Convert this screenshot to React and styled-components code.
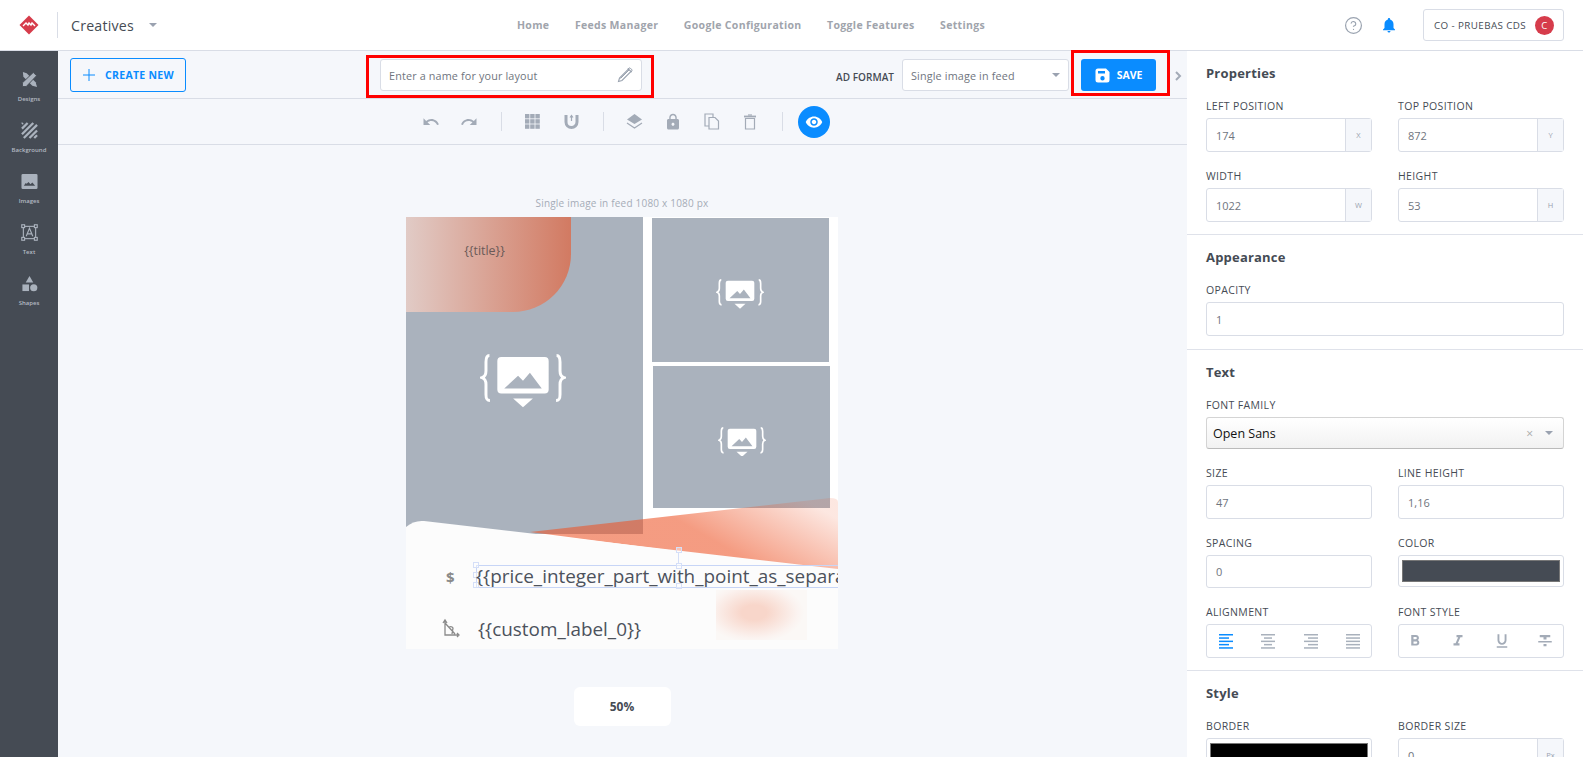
import React from "react";
import styled, { createGlobalStyle } from "styled-components";
import { MdUndo, MdRedo, MdVisibility, MdLock, MdNotifications, MdFormatBold, MdFormatItalic, MdFormatUnderlined, MdFormatStrikethrough } from "react-icons/md";
import { CircleHelp } from "lucide-react";

const GlobalStyle = createGlobalStyle`
  html, body { margin: 0; padding: 0; height: 100%; overflow: hidden; }
  body { font-family: "Open Sans", sans-serif; color: #454b54; background: #f5f7fb; }
  * { box-sizing: border-box; }
`;

const Page = styled.div`
  width: 1583px;
  height: 757px;
  display: flex;
  flex-direction: column;
  overflow: hidden;
`;

const TopBar = styled.header`
  height: 51px;
  flex: none;
  display: flex;
  align-items: center;
  background: #fff;
  border-bottom: 1px solid #d9dde6;
  position: relative;
`;

const LogoBox = styled.div`
  width: 58px;
  height: 26px;
  display: flex;
  align-items: center;
  justify-content: center;
  border-right: 1px solid #d9dde6;
`;

const AppName = styled.div`
  margin-left: 13px;
  font-size: 14.2px;
  color: #454b54;
  letter-spacing: 0.2px;
`;

const Caret = styled.span`
  width: 0;
  height: 0;
  margin-left: ${p => p.$gap || 0}px;
  border-left: 4px solid transparent;
  border-right: 4px solid transparent;
  border-top: 4px solid #9aa2b0;
`;

const Nav = styled.nav`
  position: absolute;
  left: 517px;
  top: 0;
  height: 50px;
  display: flex;
  align-items: center;
  gap: 25.5px;
`;

const NavLink = styled.a`
  font-size: 10.5px;
  font-weight: 700;
  color: #a0a4ac;
  letter-spacing: 0.33px;
`;

const TopRight = styled.div`
  margin-left: auto;
  margin-right: 19px;
  display: flex;
  align-items: center;
  color: #9aa3b0;
`;

const Account = styled.div`
  width: 141px;
  height: 32px;
  margin-left: 25px;
  padding: 0 9px 0 10px;
  display: flex;
  align-items: center;
  justify-content: space-between;
  border: 1px solid #d9dde6;
  border-radius: 3px;
  font-size: 9.8px;
  font-weight: 500;
  color: #454b54;
  letter-spacing: 0.4px;
  white-space: nowrap;
`;

const Avatar = styled.span`
  width: 19px;
  height: 19px;
  border-radius: 50%;
  background: #d63c4b;
  color: #fff;
  display: flex;
  align-items: center;
  justify-content: center;
  font-size: 9.5px;
`;

const Body = styled.div`
  flex: 1;
  display: flex;
  min-height: 0;
`;

const SideBar = styled.aside`
  width: 58px;
  flex: none;
  background: #454b54;
  padding-top: 20px;
  display: flex;
  flex-direction: column;
  align-items: center;
`;

const SideItem = styled.div`
  height: 51px;
  width: 100%;
  display: flex;
  flex-direction: column;
  align-items: center;
  color: #b4bac3;
  font-size: 6px;
  line-height: 8px;
  font-weight: 600;
  gap: 7px;

  svg {
    width: 17px;
    height: 17px;
    flex: none;
  }
`;

const Main = styled.main`
  flex: 1;
  display: flex;
  flex-direction: column;
  min-width: 0;
  background: #f5f7fb;
`;

const ActionBar = styled.div`
  height: 48px;
  flex: none;
  display: flex;
  align-items: flex-start;
  padding-left: 12px;
  border-bottom: 1px solid #d9dde6;
  position: relative;
`;

const CreateButton = styled.button`
  width: 116px;
  height: 34px;
  margin-top: 7px;
  display: flex;
  align-items: center;
  gap: 10px;
  padding: 0 0 0 12px;
  background: transparent;
  border: 1px solid #0a8cff;
  border-radius: 3px;
  color: #0a8cff;
  font-family: "Open Sans", sans-serif;
  font-size: 10.5px;
  font-weight: 700;
  letter-spacing: 0.3px;
`;

const Highlight = styled.div`
  border: 3px solid #f00;
  display: flex;
  align-items: flex-start;
`;

const NameBox = styled(Highlight)`
  width: 288px;
  height: 43px;
  margin: 4px 0 0 180px;
  padding: 1px 0 0 11px;
`;

const SaveBox = styled(Highlight)`
  width: 99px;
  height: 46px;
  margin: -1px 0 0 2px;
  padding: 6px 0 0 7px;
`;

const Field = styled.div`
  height: 32px;
  background: #fff;
  border: 1px solid #d9dde6;
  border-radius: 3px;
  display: flex;
  align-items: center;
  justify-content: space-between;
  padding: 0 8px;
  font-size: 10.8px;
  color: #6f757e;
  letter-spacing: 0.15px;
`;

const NameField = styled(Field)`
  width: 262px;
`;

const FormatLabel = styled.span`
  margin: 19px 6px 0 182px;
  width: 60px;
  font-size: 10px;
  font-weight: 600;
  line-height: 14px;
  color: #454b54;
  letter-spacing: 0.05px;
  white-space: nowrap;
`;

const FormatField = styled(Field)`
  width: 167px;
  margin-top: 8px;
`;

const SaveButton = styled.button`
  width: 75px;
  height: 32px;
  display: flex;
  align-items: center;
  justify-content: center;
  gap: 7px;
  background: #0a8cff;
  border: 0;
  border-radius: 3px;
  color: #fff;
  font-family: "Open Sans", sans-serif;
  font-size: 10.5px;
  font-weight: 700;
`;

const Chevron = styled.svg`
  margin: 20px 0 0 5px;
`;

const ToolBar = styled.div`
  height: 46px;
  flex: none;
  display: flex;
  align-items: center;
  justify-content: center;
  border-bottom: 1px solid #d9dde6;
  color: #a3abb7;
  padding-right: 4px;
`;

const Tool = styled.span`
  width: 38.5px;
  display: flex;
  justify-content: center;
`;

const Separator = styled.span`
  width: 1px;
  height: 19px;
  margin: 0 12px;
  background: #d9dde6;
`;

const EyeButton = styled.span`
  width: 32px;
  height: 32px;
  border-radius: 50%;
  background: #0a8cff;
  color: #fff;
  display: flex;
  align-items: center;
  justify-content: center;
  margin-left: 3px;
`;

const Stage = styled.div`
  flex: 1;
  display: flex;
  flex-direction: column;
  align-items: center;
  padding: 51px 1px 0 0;
  min-height: 0;
`;

const Caption = styled.div`
  font-size: 10px;
  color: #a5acb7;
  line-height: 14px;
  letter-spacing: 0.2px;
  margin-bottom: 7px;
`;

const Canvas = styled.div`
  position: relative;
  width: 432px;
  height: 432px;
  flex: none;
  background: #fff;
  overflow: hidden;
`;

const ImageSlot = styled.div`
  position: absolute;
  left: ${p => p.$x}px;
  top: ${p => p.$y}px;
  width: ${p => p.$w}px;
  height: ${p => p.$h}px;
  padding: ${p => p.$shift}px ${p => p.$right || 0}px 0 0;
  background: #aab2bd;
  display: flex;
  align-items: center;
  justify-content: center;
`;

const TitleShape = styled.div`
  position: absolute;
  left: 0;
  top: 0;
  width: 165px;
  height: 95px;
  border-bottom-right-radius: 58px;
  background: linear-gradient(90deg, #e1cbc6, #d27a62);
  display: flex;
  justify-content: center;
  padding: 25px 8px 0 0;
  font-size: 12.4px;
  line-height: 17px;
  color: #6a5a58;
`;

const CanvasArt = styled.svg`
  position: absolute;
  left: 0;
  top: 0;
`;

const CanvasText = styled.div`
  position: absolute;
  left: ${p => p.$x}px;
  top: ${p => p.$y}px;
  font-size: 18.9px;
  line-height: 24px;
  color: #4c525c;
  white-space: nowrap;
`;

const Dollar = styled.div`
  position: absolute;
  left: 40px;
  top: 350px;
  font-size: 15px;
  line-height: 20px;
  font-weight: 700;
  color: #8a8a8a;
`;

const Selection = styled.div`
  position: absolute;
  left: 70px;
  top: 348px;
  width: 370px;
  height: 23px;
  border: 1px solid #c7d5f6;
`;

const Handle = styled.span`
  position: absolute;
  left: ${p => p.$x}px;
  top: ${p => p.$y}px;
  width: 6px;
  height: 6px;
  border: 1px solid #d5dff8;
  background: rgba(255, 255, 255, 0.4);
`;

const HandleStalk = styled.span`
  position: absolute;
  left: 272px;
  top: 336px;
  width: 1px;
  height: 10px;
  background: #d5dff8;
`;

const Blob = styled.div`
  position: absolute;
  left: 310px;
  top: 373px;
  width: 91px;
  height: 50px;
  background: radial-gradient(ellipse 50px 30px at 42% 45%, #f8d6ca 25%, #fbf3f0 85%, #fbf8f6 100%);
`;

const ZoomPill = styled.div`
  width: 97px;
  height: 39px;
  margin-top: 38px;
  flex: none;
  background: #fff;
  border-radius: 6px;
  display: flex;
  align-items: center;
  justify-content: center;
  font-size: 12px;
  font-weight: 700;
  color: #454b54;
`;

const Panel = styled.aside`
  width: 396px;
  flex: none;
  background: #fff;
  overflow: hidden;
`;

const Section = styled.section`
  padding: 13px 19px ${p => p.$bottom || 12}px 19px;
  border-bottom: 1px solid #dfe2ea;

  &:last-child { border-bottom: 0; }
`;

const SectionTitle = styled.h2`
  margin: 0 0 18px;
  font-size: 13px;
  line-height: 18px;
  font-weight: 700;
  color: #454b54;
  letter-spacing: 0.2px;
`;

const Grid = styled.div`
  display: grid;
  grid-template-columns: 166px 166px;
  column-gap: 26px;
  row-gap: 18px;
`;

const Wide = styled.div`
  grid-column: 1 / -1;
`;

const Label = styled.label`
  display: block;
  margin-bottom: 5px;
  font-size: 10.5px;
  line-height: 13px;
  font-weight: 500;
  color: #454b54;
  letter-spacing: 0.35px;
  white-space: nowrap;
`;

const InputBox = styled.div`
  height: ${p => p.$h || 34}px;
  display: flex;
  align-items: stretch;
  background: #fff;
  border: 1px solid #d9dde6;
  border-radius: 3px;
  font-size: 11px;
  color: #6f757e;
`;

const InputValue = styled.span`
  flex: 1;
  padding-left: 9px;
  display: flex;
  align-items: center;
`;

const Unit = styled.span`
  width: 26px;
  flex: none;
  display: flex;
  align-items: center;
  justify-content: center;
  background: #f5f7fb;
  border-left: 1px solid #d9dde6;
  font-size: 7.5px;
  color: #9aa3b0;
`;

const Swatch = styled.div`
  height: 32px;
  padding: 4px 3px;
  background: #fff;
  border: 1px solid #d9dde6;
  border-radius: 3px;

  div {
    height: 22px;
    background: ${p => p.$color};
    border: 1px solid #777;
  }
`;

const FontSelect = styled.div`
  height: 32px;
  display: flex;
  align-items: center;
  justify-content: space-between;
  padding: 0 10px 0 6px;
  background: linear-gradient(#fff, #f2f2f2);
  border: 1px solid #d4d4d4;
  border-bottom-color: #bbb;
  border-radius: 3px;
  font-size: 12.5px;
  color: #111;
`;

const SelectEnd = styled.span`
  display: flex;
  align-items: center;
  gap: 9px;
  color: #aaa;
  font-size: 12px;
`;

const IconGroup = styled(InputBox)`
  align-items: center;
  justify-content: space-between;
  padding: ${p => p.$pad};
  color: #a3abb7;
`;

const alignments = {
  left: [[0, 14], [0, 10], [0, 14], [0, 10], [0, 14]],
  center: [[0, 14], [3, 8], [0, 14], [3, 8], [0, 14]],
  right: [[0, 14], [4, 10], [0, 14], [4, 10], [0, 14]],
  justify: [[0, 14], [0, 14], [0, 14], [0, 14], [0, 14]],
};

const AlignIcon = ({ kind, active }) => (
  <svg width="14" height="15" viewBox="0 0 14 15" fill={active ? "#0a8cff" : "#a9b1bc"}>
    {alignments[kind].map(([x, w], i) => <rect key={i} x={x} y={i * 3.3} width={w} height="1.5" />)}
  </svg>
);

const ImagePlaceholder = ({ size }) => (
  <svg width={size} height={size * 0.62} viewBox="0 0 86 54" fill="#fff">
    <path d="M9 1.500C6 1.500 5.500 4 5.500 8v9c0 4-1 6-4 7 3 1 4 3 4 7v10c0 4 .5 6 4 6" fill="none" stroke="#fff" strokeWidth="3" />
    <path d="M77 1.500c3 0 3.500 2.500 3.500 6.500v9c0 4 1 6 4 7-3 1-4 3-4 7v10c0 4-.5 6-4 6" fill="none" stroke="#fff" strokeWidth="3" />
    <path fillRule="evenodd" d="M21 3h44a4 4 0 0 1 4 4v29a4 4 0 0 1-4 4H21a4 4 0 0 1-4-4V7a4 4 0 0 1 4-4Zm3 32h38l-12-16-7 8-5-5Z" />
    <path d="M33 45h20L43 54Z" />
  </svg>
);

function App() {
  return (
    <Page>
      <GlobalStyle />
      <TopBar>
        <LogoBox>
          <svg width="20" height="20" viewBox="0 0 20 20">
            <path d="M10 0.500 19.500 10 10 19.500 0.500 10Z" fill="#d63c4b" />
            <path d="M4 11 7 8l2 2 1-2 2 2 1-2 3 3" fill="none" stroke="#fff" strokeWidth="1.400" />
          </svg>
        </LogoBox>
        <AppName>Creatives</AppName>
        <Caret $gap={15} />
        <Nav>
          <NavLink>Home</NavLink>
          <NavLink>Feeds Manager</NavLink>
          <NavLink>Google Configuration</NavLink>
          <NavLink>Toggle Features</NavLink>
          <NavLink>Settings</NavLink>
        </Nav>
        <TopRight>
          <CircleHelp size={19} strokeWidth={1.5} />
          <MdNotifications size={18} color="#0a8cff" style={{ marginLeft: 17 }} />
          <Account>CO - PRUEBAS CDS <Avatar>C</Avatar></Account>
        </TopRight>
      </TopBar>
      <Body>
        <SideBar>
          <SideItem>
            <svg viewBox="0 0 18 18" fill="#aab2bd">
              <path d="M2 1 6 2.500 15.500 12l1.500 5-5-1.500L2.500 6Z" />
              <path d="M13 1.500 16.500 5 5.500 16.500H1.500V12.500Z" stroke="#454b54" strokeWidth="1" />
            </svg>
            Designs
          </SideItem>
          <SideItem>
            <svg viewBox="0 0 18 18" fill="none" stroke="#aab2bd" strokeWidth="2.400">
              <path d="M1 7 7 1M1 13 13 1M3 17 17 3M9 17 17 9M14 17 17 14M1 2 2 1" />
            </svg>
            Background
          </SideItem>
          <SideItem>
            <svg viewBox="0 0 18 18" fill="#aab2bd">
              <path fillRule="evenodd" d="M2 1h14a1.500 1.500 0 0 1 1.500 1.500v13A1.500 1.500 0 0 1 16 17H2a1.500 1.500 0 0 1-1.500-1.500v-13A1.500 1.500 0 0 1 2 1Zm1 12.500h12L12 10l-2 2-2-2.500-2 2-1-1Z" />
            </svg>
            Images
          </SideItem>
          <SideItem>
            <svg viewBox="0 0 18 18" fill="none" stroke="#aab2bd" strokeWidth="1.200">
              <rect x="2.500" y="2.500" width="13" height="13" />
              <rect x="0.800" y="0.800" width="3" height="3" fill="#454b54" />
              <rect x="14.200" y="0.800" width="3" height="3" fill="#454b54" />
              <rect x="0.800" y="14.200" width="3" height="3" fill="#454b54" />
              <rect x="14.200" y="14.200" width="3" height="3" fill="#454b54" />
              <path d="M5.500 13 9 4.500 12.500 13M6.500 10.500h5" />
            </svg>
            Text
          </SideItem>
          <SideItem>
            <svg viewBox="0 0 18 18" fill="#aab2bd">
              <path d="M9 1 13 8H5Z" />
              <rect x="1.500" y="10" width="7" height="7" />
              <circle cx="13.500" cy="13.500" r="3.800" />
            </svg>
            Shapes
          </SideItem>
        </SideBar>
        <Main>
          <ActionBar>
            <CreateButton>
              <svg width="12" height="12" viewBox="0 0 12 12" stroke="#0a8cff" strokeWidth="1"><path d="M6 0v12M0 6h12" /></svg>
              CREATE NEW
            </CreateButton>
            <NameBox>
              <NameField>
                Enter a name for your layout
                <svg width="16" height="16" viewBox="0 0 16 16" fill="none" stroke="#9aa3b0">
                  <path d="M1.500 14.500 2.500 11 11.500 2l2.500 2.500-9 9Z" strokeWidth="1.100" />
                  <path d="M3.500 11.500 12 3M10.500 2 13 .8 15.200 3 14 5.500" strokeWidth="1" />
                </svg>
              </NameField>
            </NameBox>
            <FormatLabel>AD FORMAT</FormatLabel>
            <FormatField>
              Single image in feed
              <Caret />
            </FormatField>
            <SaveBox>
              <SaveButton>
                <svg width="15" height="15" viewBox="0 0 15 15" fill="#fff">
                  <path fillRule="evenodd" d="M3 .5h8l3.500 3.500v8a2.500 2.500 0 0 1-2.500 2.500H3A2.500 2.500 0 0 1 .5 12V3A2.500 2.500 0 0 1 3 .5ZM3 3v2.500h7V3Zm4.500 5a2.200 2.200 0 1 0 0 4.400 2.200 2.200 0 0 0 0-4.400Z" />
                </svg>
                SAVE
              </SaveButton>
            </SaveBox>
            <Chevron width="7" height="10" viewBox="0 0 7 10" fill="none" stroke="#a3abb7" strokeWidth="2"><path d="M1 1l4 4-4 4" /></Chevron>
          </ActionBar>
          <ToolBar>
            <Tool><MdUndo size={18} /></Tool>
            <Tool><MdRedo size={18} /></Tool>
            <Separator />
            <Tool>
              <svg width="15" height="15" viewBox="0 0 15 15" fill="#a3abb7">
                {[0, 5.2, 10.4].flatMap(y => [0, 5.2, 10.4].map(x => <rect key={x + "-" + y} x={x} y={y} width="4.400" height="4.400" />))}
              </svg>
            </Tool>
            <Tool>
              <svg width="15" height="15" viewBox="0 0 15 15" fill="none" stroke="#a3abb7">
                <path d="M2 1v7a5.500 5.500 0 0 0 11 0V1" strokeWidth="3" />
                <path d="M7.500 7V1.500M6 3.500 7.500 1.500 9 3.500" strokeWidth="1.200" />
              </svg>
            </Tool>
            <Separator />
            <Tool>
              <svg width="17" height="17" viewBox="0 0 17 17" fill="#a3abb7">
                <path d="M8.500 1 16 6.500 8.500 11 1 6.500Z" />
                <path d="M1 10 8.500 15 16 10" fill="none" stroke="#a3abb7" strokeWidth="1.300" />
              </svg>
            </Tool>
            <Tool><MdLock size={18} /></Tool>
            <Tool>
              <svg width="16" height="17" viewBox="0 0 16 17" fill="#f5f7fb" stroke="#a3abb7" strokeWidth="1.200">
                <path d="M1 1h8v12H1Z" />
                <path d="M5 4.500h6l3.500 3.500v8H5Z" />
              </svg>
            </Tool>
            <Tool>
              <svg width="14" height="16" viewBox="0 0 14 16" fill="none" stroke="#a3abb7" strokeWidth="1.200">
                <path d="M2.500 4.500h9V15h-9Z" />
                <path d="M1 2.500h12" strokeWidth="1.800" />
                <path d="M5 1h4" />
              </svg>
            </Tool>
            <Separator />
            <EyeButton><MdVisibility size={18} /></EyeButton>
          </ToolBar>
          <Stage>
            <Caption>Single image in feed 1080 x 1080 px</Caption>
            <Canvas>
              <ImageSlot $x={0} $y={0} $w={237} $h={317} $shift={11} $right={4}><ImagePlaceholder size={86} /></ImageSlot>
              <ImageSlot $x={246} $y={1} $w={177} $h={144} $shift={8} $right={2}><ImagePlaceholder size={48} /></ImageSlot>
              <ImageSlot $x={247} $y={149} $w={177} $h={142} $shift={9}><ImagePlaceholder size={48} /></ImageSlot>
              <TitleShape>{"{{title}}"}</TitleShape>
              <CanvasArt width="432" height="432" viewBox="0 0 432 432">
                <defs>
                  <linearGradient id="peach" gradientUnits="userSpaceOnUse" x1="345" y1="345" x2="385" y2="275">
                    <stop offset="0" stopColor="#ed5427" stopOpacity="0.58" />
                    <stop offset="1" stopColor="#ed5427" stopOpacity="0.14" />
                  </linearGradient>
                </defs>
                <path d="M124 315 424 281q8 0 8 4v70Z" fill="url(#peach)" />
                <path d="M0 310q8-7 18-6L432 352v80H0Z" fill="#fcfcfc" />
              </CanvasArt>
              <Blob />
              <Dollar>$</Dollar>
              <Selection />
              <HandleStalk />
              <Handle $x={67} $y={345} />
              <Handle $x={67} $y={355} />
              <Handle $x={67} $y={365} />
              <Handle $x={270} $y={346} />
              <Handle $x={270} $y={366} />
              <Handle $x={270} $y={330} />
              <CanvasText $x={70} $y={347}>{"{{price_integer_part_with_point_as_separator}}"}</CanvasText>
              <CanvasArt width="432" height="432" viewBox="0 0 432 432" fill="none" stroke="#8a8a8a" strokeWidth="1.300">
                <path d="M39 404v14h13M39 406 49 417M43 410q3-1 4 1l-1 6M37 406l2-3 2 3M51 416l2 2-2 2" />
              </CanvasArt>
              <CanvasText $x={72} $y={400}>{"{{custom_label_0}}"}</CanvasText>
            </Canvas>
            <ZoomPill>50%</ZoomPill>
          </Stage>
        </Main>
        <Panel>
          <Section>
            <SectionTitle>Properties</SectionTitle>
            <Grid>
              <div><Label>LEFT POSITION</Label><InputBox><InputValue>174</InputValue><Unit>X</Unit></InputBox></div>
              <div><Label>TOP POSITION</Label><InputBox><InputValue>872</InputValue><Unit>Y</Unit></InputBox></div>
              <div><Label>WIDTH</Label><InputBox><InputValue>1022</InputValue><Unit>W</Unit></InputBox></div>
              <div><Label>HEIGHT</Label><InputBox><InputValue>53</InputValue><Unit>H</Unit></InputBox></div>
            </Grid>
          </Section>
          <Section $bottom={13}>
            <SectionTitle>Appearance</SectionTitle>
            <Label>OPACITY</Label>
            <InputBox><InputValue>1</InputValue></InputBox>
          </Section>
          <Section>
            <SectionTitle>Text</SectionTitle>
            <Grid>
              <Wide>
                <Label>FONT FAMILY</Label>
                <FontSelect>Open Sans <SelectEnd>× <Caret $gap={3} /></SelectEnd></FontSelect>
              </Wide>
              <div><Label>SIZE</Label><InputBox><InputValue>47</InputValue></InputBox></div>
              <div><Label>LINE HEIGHT</Label><InputBox><InputValue>1,16</InputValue></InputBox></div>
              <div><Label>SPACING</Label><InputBox $h={33}><InputValue>0</InputValue></InputBox></div>
              <div><Label>COLOR</Label><Swatch $color="#454b54"><div /></Swatch></div>
              <div>
                <Label>ALIGNMENT</Label>
                <IconGroup $pad="0 11px 0 12px">
                  <AlignIcon kind="left" active />
                  <AlignIcon kind="center" />
                  <AlignIcon kind="right" />
                  <AlignIcon kind="justify" />
                </IconGroup>
              </div>
              <div>
                <Label>FONT STYLE</Label>
                <IconGroup $pad="0 9px 0 7px">
                  <MdFormatBold size={18} />
                  <MdFormatItalic size={18} />
                  <MdFormatUnderlined size={18} />
                  <MdFormatStrikethrough size={18} />
                </IconGroup>
              </div>
            </Grid>
          </Section>
          <Section>
            <SectionTitle>Style</SectionTitle>
            <Grid>
              <div><Label>BORDER</Label><Swatch $color="#000"><div /></Swatch></div>
              <div><Label>BORDER SIZE</Label><InputBox><InputValue>0</InputValue><Unit>Px</Unit></InputBox></div>
            </Grid>
          </Section>
        </Panel>
      </Body>
    </Page>
  );
}

export default App;
